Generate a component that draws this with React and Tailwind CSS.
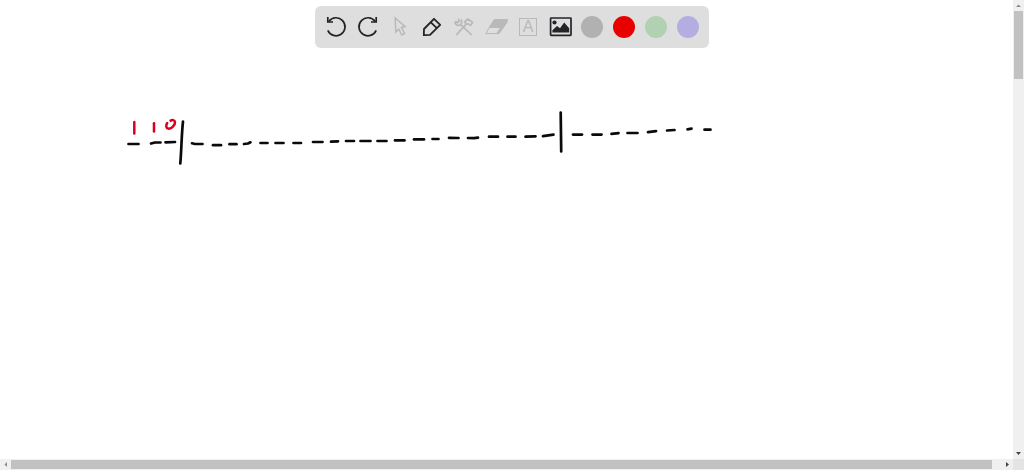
import React, { useState } from 'react';

const TOOLS = [
  { id: 'undo', label: 'Undo', enabled: true },
  { id: 'redo', label: 'Redo', enabled: true },
  { id: 'select', label: 'Select', enabled: false },
  { id: 'pen', label: 'Pen', enabled: true },
  { id: 'tools', label: 'Tools', enabled: false },
  { id: 'eraser', label: 'Eraser', enabled: false },
  { id: 'text', label: 'Text', enabled: false },
  { id: 'image', label: 'Image', enabled: true },
];

const COLORS = [
  { label: 'Gray', className: 'bg-[#b1b1b1]' },
  { label: 'Red', className: 'bg-[#e80000]' },
  { label: 'Green', className: 'bg-[#b2d0b2]' },
  { label: 'Purple', className: 'bg-[#b4ade1]' },
];

const BLACK_STROKES = [
  'M128.5 144H138.5',
  'M151 143.5L155 142.5H160.5',
  'M165.5 142.3L175 142',
  'M183 121.5C181.5 135 181.5 150 180.3 163.5',
  'M192 143.3L195 144H202.5',
  'M213 145.2H221',
  'M229.5 144.2H236.5',
  'M244 144L248 143.5L250.5 142.3',
  'M260.5 143H267.5',
  'M275.5 143H283.5',
  'M293.5 143H301',
  'M313 142H322.5',
  'M331 141.6L338 141.3',
  'M346 141H354',
  'M360.5 141H370.5',
  'M377.5 141H386.5',
  'M395 140.4H404.5',
  'M414 139.4H424',
  'M432.5 139H438.5',
  'M449 137.8L458.5 138',
  'M468 138L474 138.2L478 137.6',
  'M489 136.7H498',
  'M507.5 136.7H515.5',
  'M525.5 136.7L535.5 136.3',
  'M543 136.2L553.5 134.6',
  'M560.7 112.5L561.2 151.5',
  'M573 134.6H582',
  'M592.5 134.6H601.5',
  'M611.5 133.8L618.5 133.1',
  'M627.5 133H637.5',
  'M648 132.2L656 131.2',
  'M667 130.5L674.5 130',
  'M687.5 129.3L691.5 128.7',
  'M704.5 129.7H710.5',
];

const RED_STROKES = [
  'M134.3 122V133.5',
  'M154 123.3V131.5',
  'M167.2 123C165.8 125 165.8 128 168.2 128.6C171.5 129.2 175.2 125 175 122C174.6 119.8 172.2 119.6 170.6 120.6',
];

function ToolIcon({ id }) {
  const line = {
    viewBox: '0 0 24 24',
    className: 'size-6 overflow-visible',
    fill: 'none',
    stroke: 'currentColor',
    'aria-hidden': true,
  };

  switch (id) {
    case 'undo':
      return (
        <svg {...line} strokeWidth="1.7">
          <path d="M4.8 6.4A9 9 0 1 1 3.8 15.4" />
          <path d="M3.8 2V7H9" />
        </svg>
      );
    case 'redo':
      return (
        <svg {...line} strokeWidth="1.7">
          <path d="M19.2 6.4A9 9 0 1 0 20.2 15.4" />
          <path d="M20.2 2V7H15" />
        </svg>
      );
    case 'select':
      return (
        <svg {...line} strokeWidth="1.5">
          <path d="M7.2 3L17.2 11.6L13.4 12.6L16.6 18.4L13.8 20L10.8 14.2L7.8 17Z" />
        </svg>
      );
    case 'pen':
      return (
        <svg {...line} strokeWidth="1.8" strokeLinejoin="round">
          <path d="M3.8 20.2L4 14L14 3.8L20.2 9.8L10 19.8Z" />
          <path d="M10.6 7.2L16.8 13.2" />
        </svg>
      );
    case 'tools':
      return (
        <svg {...line} strokeWidth="1.7" strokeLinejoin="round">
          <path d="M3 6.6C2.8 9.2 5 11 7.6 10.2C9.8 9.2 10.4 6.4 8.8 4.6" />
          <path d="M3 6.6L5.6 7.6L7.2 6.2L6.4 3.8" />
          <path d="M8.8 9.8L19.8 20" />
          <path d="M12.6 6.8L16 4L20.6 7.4L18.4 10.4L15.8 8.6L14.2 9.2Z" />
          <path d="M14.2 9.2L4.4 19.8" />
        </svg>
      );
    case 'eraser':
      return (
        <svg {...line} strokeWidth="1" strokeLinejoin="round">
          <path d="M10.2 4.6H23.8L22.6 8L15 18.6H12.6L16.8 12.4H5.2Z" fill="currentColor" />
          <path d="M5.2 12.4L2 18.6H12.6" />
        </svg>
      );
    case 'text':
      return (
        <span className="flex size-[18px] items-center justify-center border border-current font-['Liberation_Sans',sans-serif] text-base leading-4">
          A
        </span>
      );
    default:
      return (
        <svg {...line} strokeWidth="1.7">
          <rect x="2.6" y="3" width="20.4" height="17.4" rx="0.6" />
          <circle cx="6.5" cy="7.5" r="2.1" fill="currentColor" stroke="none" />
          <path
            d="M4.4 17.6V15.2L9 11L12 13.2L16.2 7.4L21.2 13.2V17.6Z"
            fill="currentColor"
            stroke="none"
          />
        </svg>
      );
  }
}

function Toolbar() {
  const [color, setColor] = useState('Red');

  return (
    <div
      role="toolbar"
      aria-label="Drawing tools"
      className="flex items-center gap-2 rounded-md bg-[#dedede] p-[9px]"
    >
      {TOOLS.map((tool) => (
        <button
          key={tool.id}
          type="button"
          aria-label={tool.label}
          disabled={!tool.enabled}
          className="flex size-6 items-center justify-center text-[#222427] disabled:text-[#b9b9b9]"
        >
          <ToolIcon id={tool.id} />
        </button>
      ))}
      {COLORS.map((c) => (
        <button
          key={c.label}
          type="button"
          aria-label={c.label}
          aria-pressed={color === c.label}
          onClick={() => setColor(c.label)}
          className="flex size-6 items-center justify-center"
        >
          <span className={`size-[22px] rounded-full ${c.className}`} />
        </button>
      ))}
    </div>
  );
}

function Arrow({ d, className }) {
  return (
    <svg viewBox="0 0 11 11" className={`size-[11px] shrink-0 ${className}`} aria-hidden="true">
      <path d={d} fill="currentColor" />
    </svg>
  );
}

function App() {
  return (
    <div className="relative grid h-screen grid-cols-[1fr_11px] grid-rows-[1fr_11px] overflow-hidden bg-white">
      <main className="overflow-hidden">
        <svg
          width="720"
          height="180"
          viewBox="0 0 720 180"
          className="block max-w-none"
          fill="none"
          strokeLinecap="round"
          strokeLinejoin="round"
          role="img"
          aria-label="Whiteboard drawing"
        >
          <g stroke="#0a0a0a" strokeWidth="2.7">
            {BLACK_STROKES.map((d) => (
              <path key={d} d={d} />
            ))}
          </g>
          <g stroke="#d9001f" strokeWidth="2.5">
            {RED_STROKES.map((d) => (
              <path key={d} d={d} />
            ))}
          </g>
        </svg>
      </main>

      {/* vertical scrollbar */}
      <div className="flex flex-col bg-[#f0f0f0]">
        <Arrow d="M3 7L5.5 4.5L8 7Z" className="text-[#8b8b8b]" />
        <div className="flex-1 px-px">
          <div className="h-[68px] bg-[#c1c1c1]" />
        </div>
        <Arrow d="M3 4L5.5 7L8 4Z" className="text-[#444444]" />
      </div>

      {/* horizontal scrollbar */}
      <div className="flex bg-[#f0f0f0]">
        <Arrow d="M7 3L4.5 5.5L7 8Z" className="text-[#8b8b8b]" />
        <div className="flex-1 py-px">
          <div className="h-full w-[99%] bg-[#c1c1c1]" />
        </div>
        <Arrow d="M4 3L7 5.5L4 8Z" className="text-[#444444]" />
      </div>
      <div className="bg-[#e4e4e4]" />

      <div className="absolute inset-x-0 top-[6px] flex justify-center">
        <Toolbar />
      </div>
    </div>
  );
}

export default App;
